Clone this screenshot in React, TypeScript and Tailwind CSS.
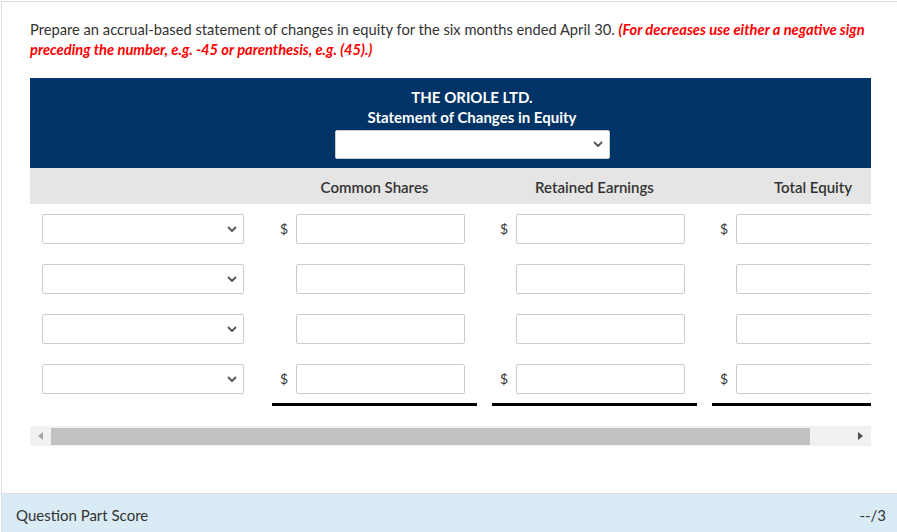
import React from 'react';

const Chevron: React.FC = () => (
  <svg width="10" height="7" viewBox="0 0 10 7" className="shrink-0">
    <path d="M1.5 1.5 L5 5 L8.5 1.5" fill="none" stroke="#555" strokeWidth="1.8" strokeLinecap="round" strokeLinejoin="round" />
  </svg>
);

const SelectBox: React.FC<{ className: string }> = ({ className }) => (
  <div className={`flex items-center justify-end bg-white border border-[#cccccc] rounded-[2px] ${className}`}>
    <Chevron />
  </div>
);

const AmountCell: React.FC<{ dollar: boolean; width: string }> = ({ dollar, width }) => (
  <div className={`flex items-center ${width}`}>
    <span className="w-[24px] text-center text-[14px] text-[#333]">{dollar ? '$' : ''}</span>
    <div className="w-[169px] h-[30px] bg-white border border-[#cccccc] rounded-[2px]" />
  </div>
);

const rows = [true, false, false, true];

const App: React.FC = () => {
  return (
    <div className="w-[897px] h-[532px] overflow-hidden bg-white font-['Lato','Noto_Sans',sans-serif] text-[#333]">
      <div className="ml-[1px] mt-[1px] w-[920px] h-[560px] border border-[#dddddd] flex flex-col">
        <div className="pl-[28px] pt-[17px] text-[14.7px] leading-[20px]">
          <p>
            Prepare an accrual-based statement of changes in equity for the six months ended April 30.{' '}
            <span className="text-[#ff0000] font-bold italic">(For decreases use either a negative sign</span>
            <br />
            <span className="text-[#ff0000] font-bold italic">preceding the number, e.g. -45 or parenthesis, e.g. (45).)</span>
          </p>

          <div className="mt-[19px] w-[841px] overflow-hidden">
            <div className="w-[884px]">
              {/* navy title block */}
              <div className="h-[90px] bg-[#003366] text-white flex flex-col items-center pt-[9px]">
                <div className="text-[15px] leading-[20px] font-bold">THE ORIOLE LTD.</div>
                <div className="text-[15px] leading-[20px] font-bold">Statement of Changes in Equity</div>
                <SelectBox className="mt-[3px] w-[275px] h-[29px] pr-[6px]" />
              </div>

              {/* column headings */}
              <div className="h-[36px] pt-[1px] bg-[#e5e5e5] flex items-center text-[15px] font-semibold text-[#333]">
                <div className="w-[242px]" />
                <div className="w-[205px] text-center">Common Shares</div>
                <div className="w-[15px]" />
                <div className="w-[205px] text-center">Retained Earnings</div>
                <div className="w-[15px]" />
                <div className="w-[202px] text-center">Total Equity</div>
              </div>

              <div className="mt-[10px] flex flex-col gap-[20px]">
                {rows.map((dollar, i) => (
                  <div key={i} className="flex items-center h-[30px]">
                    <div className="w-[12px]" />
                    <SelectBox className="w-[202px] h-[30px] pr-[6px]" />
                    <div className="w-[28px]" />
                    <AmountCell dollar={dollar} width="w-[205px]" />
                    <div className="w-[15px]" />
                    <AmountCell dollar={dollar} width="w-[205px]" />
                    <div className="w-[15px]" />
                    <AmountCell dollar={dollar} width="w-[202px]" />
                  </div>
                ))}
              </div>

              <div className="mt-[9px] flex">
                <div className="w-[242px]" />
                <div className="w-[205px] h-[3px] bg-black" />
                <div className="w-[15px]" />
                <div className="w-[205px] h-[3px] bg-black" />
                <div className="w-[15px]" />
                <div className="w-[202px] h-[3px] bg-black" />
              </div>
            </div>

            {/* horizontal scrollbar */}
            <div className="mt-[20px] h-[20px] bg-[#f1f1f1] flex items-center">
              <div className="w-[21px] flex justify-center">
                <div className="w-0 h-0 border-y-[4px] border-y-transparent border-r-[5px] border-r-[#a3a3a3]" />
              </div>
              <div className="w-[759px] h-[17px] bg-[#c1c1c1]" />
              <div className="flex-1 flex justify-end pr-[8px]">
                <div className="w-0 h-0 border-y-[4px] border-y-transparent border-l-[5px] border-l-[#505050]" />
              </div>
            </div>
          </div>
        </div>

        <div className="mt-[47px] border-t border-[#dddddd] bg-[#d9ecf5] h-[60px] pl-[14px] pr-[34px] pt-[11px] flex justify-between text-[15px] leading-[20px] text-[#333]">
          <span>Question Part Score</span>
          <span>--/3</span>
        </div>
      </div>
    </div>
  );
};

export default App;
